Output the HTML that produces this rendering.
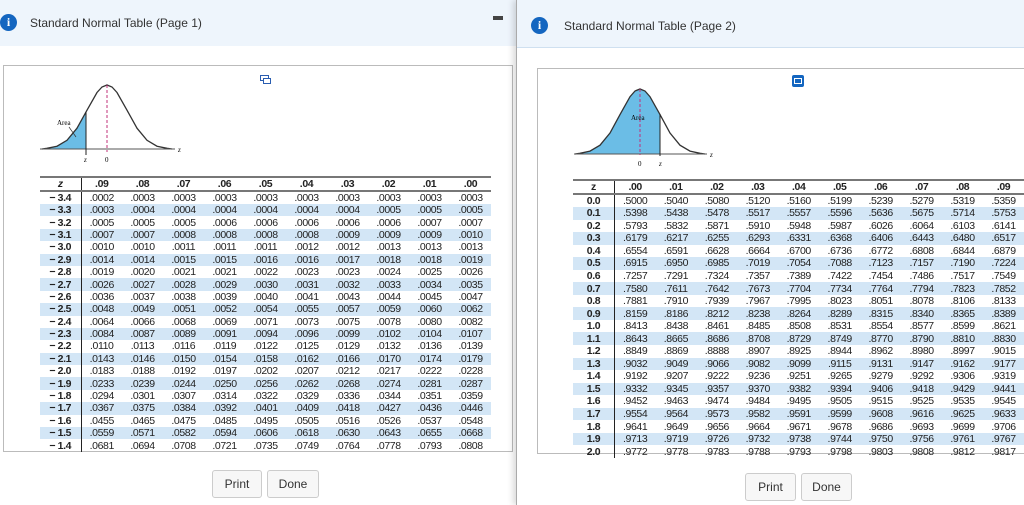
<!DOCTYPE html>
<html><head><meta charset="utf-8">
<style>
*{margin:0;padding:0;box-sizing:border-box}
body{width:1024px;height:505px;overflow:hidden;background:#fff;font-family:"Liberation Sans",sans-serif;position:relative}
.abs{position:absolute}
.hdr{background:#eef5fc}
.info{position:absolute;width:17px;height:17px;border-radius:50%;background:#1466c0;color:#fff;font:bold 12px "Liberation Serif",serif;text-align:center;line-height:17px}
.title{position:absolute;font-size:12px;color:#333}
.box{position:absolute;border:1px solid #bbb;background:#fff}
table{position:absolute;border-collapse:collapse;table-layout:fixed;font-size:10.5px;color:#222}
td,th{height:12.55px;padding:0;text-align:center;white-space:nowrap;line-height:12px;letter-spacing:-.4px}
table.l td,table.l th{height:12.4px}
th{font-weight:bold;font-size:10.5px}
tr.s td{background:#d3e6f6}
td:first-child,th:first-child{border-right:1px solid #222;font-weight:bold}
thead tr{border-top:2px solid #777;border-bottom:2px solid #777}
.btn{position:absolute;height:28px;border:1px solid #ccc;border-radius:3px;background:#f7f7f7;font-size:12px;color:#333;text-align:center;line-height:26px}
</style></head><body>
<!-- left panel -->
<div class="abs hdr" style="left:0;top:0;width:516px;height:46px"></div>
<div class="info" style="left:0;top:14px">i</div>
<div class="title" style="left:30px;top:16px">Standard Normal Table (Page 1)</div>
<div class="abs" style="left:493px;top:16px;width:10px;height:4px;background:#444"></div>
<div class="box" style="left:3px;top:65px;width:510px;height:387px"></div>
<div class="abs" style="left:260px;top:75px;width:9px;height:6px;border:1.5px solid #2a5db0"></div>
<div class="abs" style="left:263px;top:78px;width:8px;height:6px;border:1.5px solid #2a5db0;background:#fff"></div>
<svg class="abs" style="left:0;top:0" width="512" height="180">
<polygon points="42,149 47,148.3 57,146.2 67,140.3 77,128.2 86,112 86,149" fill="#6bbde6"/>
<polyline points="42,149 47,148.3 57,146.2 67,140.3 77,128.2 87,110.2 97,92.5 102,87 107,85 112,87 117,92.5 127,110.2 137,128.2 147,140.3 157,146.2 167,148.3 172,149" fill="none" stroke="#333" stroke-width="1.3"/>
<line x1="40" y1="149" x2="175" y2="149" stroke="#555"/>
<line x1="86" y1="112" x2="86" y2="155" stroke="#222"/>
<line x1="107" y1="85" x2="107" y2="152" stroke="#c0307a" stroke-dasharray="3,2"/>
<text x="57" y="125" font-size="7" font-family="Liberation Serif">Area</text>
<line x1="69" y1="127" x2="76" y2="137" stroke="#333" stroke-width=".7"/>
<text x="84" y="162" font-size="7" font-family="Liberation Serif" font-style="italic">z</text>
<text x="105" y="162" font-size="7" font-family="Liberation Serif">0</text>
<text x="178" y="152" font-size="7" font-family="Liberation Serif" font-style="italic">z</text>
</svg>
<table class="l" style="left:40px;top:176px;width:451px">
<colgroup><col style="width:41px"><col span="10" style="width:41px"></colgroup>
<thead><tr><th><i>z</i></th><th>.09</th><th>.08</th><th>.07</th><th>.06</th><th>.05</th><th>.04</th><th>.03</th><th>.02</th><th>.01</th><th>.00</th></tr></thead>
<tbody>
<tr><td>− 3.4</td><td>.0002</td><td>.0003</td><td>.0003</td><td>.0003</td><td>.0003</td><td>.0003</td><td>.0003</td><td>.0003</td><td>.0003</td><td>.0003</td></tr>
<tr class="s"><td>− 3.3</td><td>.0003</td><td>.0004</td><td>.0004</td><td>.0004</td><td>.0004</td><td>.0004</td><td>.0004</td><td>.0005</td><td>.0005</td><td>.0005</td></tr>
<tr><td>− 3.2</td><td>.0005</td><td>.0005</td><td>.0005</td><td>.0006</td><td>.0006</td><td>.0006</td><td>.0006</td><td>.0006</td><td>.0007</td><td>.0007</td></tr>
<tr class="s"><td>− 3.1</td><td>.0007</td><td>.0007</td><td>.0008</td><td>.0008</td><td>.0008</td><td>.0008</td><td>.0009</td><td>.0009</td><td>.0009</td><td>.0010</td></tr>
<tr><td>− 3.0</td><td>.0010</td><td>.0010</td><td>.0011</td><td>.0011</td><td>.0011</td><td>.0012</td><td>.0012</td><td>.0013</td><td>.0013</td><td>.0013</td></tr>
<tr class="s"><td>− 2.9</td><td>.0014</td><td>.0014</td><td>.0015</td><td>.0015</td><td>.0016</td><td>.0016</td><td>.0017</td><td>.0018</td><td>.0018</td><td>.0019</td></tr>
<tr><td>− 2.8</td><td>.0019</td><td>.0020</td><td>.0021</td><td>.0021</td><td>.0022</td><td>.0023</td><td>.0023</td><td>.0024</td><td>.0025</td><td>.0026</td></tr>
<tr class="s"><td>− 2.7</td><td>.0026</td><td>.0027</td><td>.0028</td><td>.0029</td><td>.0030</td><td>.0031</td><td>.0032</td><td>.0033</td><td>.0034</td><td>.0035</td></tr>
<tr><td>− 2.6</td><td>.0036</td><td>.0037</td><td>.0038</td><td>.0039</td><td>.0040</td><td>.0041</td><td>.0043</td><td>.0044</td><td>.0045</td><td>.0047</td></tr>
<tr class="s"><td>− 2.5</td><td>.0048</td><td>.0049</td><td>.0051</td><td>.0052</td><td>.0054</td><td>.0055</td><td>.0057</td><td>.0059</td><td>.0060</td><td>.0062</td></tr>
<tr><td>− 2.4</td><td>.0064</td><td>.0066</td><td>.0068</td><td>.0069</td><td>.0071</td><td>.0073</td><td>.0075</td><td>.0078</td><td>.0080</td><td>.0082</td></tr>
<tr class="s"><td>− 2.3</td><td>.0084</td><td>.0087</td><td>.0089</td><td>.0091</td><td>.0094</td><td>.0096</td><td>.0099</td><td>.0102</td><td>.0104</td><td>.0107</td></tr>
<tr><td>− 2.2</td><td>.0110</td><td>.0113</td><td>.0116</td><td>.0119</td><td>.0122</td><td>.0125</td><td>.0129</td><td>.0132</td><td>.0136</td><td>.0139</td></tr>
<tr class="s"><td>− 2.1</td><td>.0143</td><td>.0146</td><td>.0150</td><td>.0154</td><td>.0158</td><td>.0162</td><td>.0166</td><td>.0170</td><td>.0174</td><td>.0179</td></tr>
<tr><td>− 2.0</td><td>.0183</td><td>.0188</td><td>.0192</td><td>.0197</td><td>.0202</td><td>.0207</td><td>.0212</td><td>.0217</td><td>.0222</td><td>.0228</td></tr>
<tr class="s"><td>− 1.9</td><td>.0233</td><td>.0239</td><td>.0244</td><td>.0250</td><td>.0256</td><td>.0262</td><td>.0268</td><td>.0274</td><td>.0281</td><td>.0287</td></tr>
<tr><td>− 1.8</td><td>.0294</td><td>.0301</td><td>.0307</td><td>.0314</td><td>.0322</td><td>.0329</td><td>.0336</td><td>.0344</td><td>.0351</td><td>.0359</td></tr>
<tr class="s"><td>− 1.7</td><td>.0367</td><td>.0375</td><td>.0384</td><td>.0392</td><td>.0401</td><td>.0409</td><td>.0418</td><td>.0427</td><td>.0436</td><td>.0446</td></tr>
<tr><td>− 1.6</td><td>.0455</td><td>.0465</td><td>.0475</td><td>.0485</td><td>.0495</td><td>.0505</td><td>.0516</td><td>.0526</td><td>.0537</td><td>.0548</td></tr>
<tr class="s"><td>− 1.5</td><td>.0559</td><td>.0571</td><td>.0582</td><td>.0594</td><td>.0606</td><td>.0618</td><td>.0630</td><td>.0643</td><td>.0655</td><td>.0668</td></tr>
<tr><td>− 1.4</td><td>.0681</td><td>.0694</td><td>.0708</td><td>.0721</td><td>.0735</td><td>.0749</td><td>.0764</td><td>.0778</td><td>.0793</td><td>.0808</td></tr>
</tbody></table>
<div class="btn" style="left:212px;top:470px;width:50px">Print</div>
<div class="btn" style="left:267px;top:470px;width:52px">Done</div>

<!-- right panel -->
<div class="abs" style="left:516px;top:0;width:508px;height:505px;background:#fff;border-left:1px solid #aaa;box-shadow:-3px 0 6px rgba(0,0,0,.15)"></div>
<div class="abs hdr" style="left:517px;top:0;width:507px;height:48px;border-bottom:1px solid #cfe0f0"></div>
<div class="info" style="left:531px;top:17px">i</div>
<div class="title" style="left:564px;top:19px">Standard Normal Table (Page 2)</div>
<div class="box" style="left:537px;top:68px;width:495px;height:386px"></div>
<div class="abs" style="left:792px;top:75px;width:12px;height:12px;background:#1466c0;border-radius:2px"></div>
<div class="abs" style="left:794px;top:78px;width:8px;height:6px;border:1px solid #fff"></div>
<svg class="abs" style="left:512px;top:0" width="512" height="180">
<polygon points="63,154 68,153.3 78,151.1 88,145.2 98,133 108,114.6 118,96.7 123,91 128,89 133,91 138,96.7 148,114.6 148,154" fill="#6bbde6"/>
<polyline points="63,154 68,153.3 78,151.1 88,145.2 98,133 108,114.6 118,96.7 123,91 128,89 133,91 138,96.7 148,114.6 158,133 168,145.2 178,151.1 188,153.3 193,154" fill="none" stroke="#333" stroke-width="1.3"/>
<line x1="62" y1="154" x2="195" y2="154" stroke="#555"/>
<line x1="148" y1="114" x2="148" y2="156" stroke="#222"/>
<line x1="128" y1="89" x2="128" y2="155" stroke="#c0307a" stroke-dasharray="3,2"/>
<text x="119" y="120" font-size="7" font-family="Liberation Serif">Area</text>
<text x="126" y="166" font-size="7" font-family="Liberation Serif">0</text>
<text x="147" y="166" font-size="7" font-family="Liberation Serif" font-style="italic">z</text>
<text x="198" y="157" font-size="7" font-family="Liberation Serif" font-style="italic">z</text>
</svg>
<table style="left:573px;top:179px;width:451px">
<colgroup><col style="width:41px"><col span="10" style="width:40.5px"></colgroup>
<thead><tr><th>z</th><th>.00</th><th>.01</th><th>.02</th><th>.03</th><th>.04</th><th>.05</th><th>.06</th><th>.07</th><th>.08</th><th>.09</th></tr></thead>
<tbody>
<tr><td>0.0</td><td>.5000</td><td>.5040</td><td>.5080</td><td>.5120</td><td>.5160</td><td>.5199</td><td>.5239</td><td>.5279</td><td>.5319</td><td>.5359</td></tr>
<tr class="s"><td>0.1</td><td>.5398</td><td>.5438</td><td>.5478</td><td>.5517</td><td>.5557</td><td>.5596</td><td>.5636</td><td>.5675</td><td>.5714</td><td>.5753</td></tr>
<tr><td>0.2</td><td>.5793</td><td>.5832</td><td>.5871</td><td>.5910</td><td>.5948</td><td>.5987</td><td>.6026</td><td>.6064</td><td>.6103</td><td>.6141</td></tr>
<tr class="s"><td>0.3</td><td>.6179</td><td>.6217</td><td>.6255</td><td>.6293</td><td>.6331</td><td>.6368</td><td>.6406</td><td>.6443</td><td>.6480</td><td>.6517</td></tr>
<tr><td>0.4</td><td>.6554</td><td>.6591</td><td>.6628</td><td>.6664</td><td>.6700</td><td>.6736</td><td>.6772</td><td>.6808</td><td>.6844</td><td>.6879</td></tr>
<tr class="s"><td>0.5</td><td>.6915</td><td>.6950</td><td>.6985</td><td>.7019</td><td>.7054</td><td>.7088</td><td>.7123</td><td>.7157</td><td>.7190</td><td>.7224</td></tr>
<tr><td>0.6</td><td>.7257</td><td>.7291</td><td>.7324</td><td>.7357</td><td>.7389</td><td>.7422</td><td>.7454</td><td>.7486</td><td>.7517</td><td>.7549</td></tr>
<tr class="s"><td>0.7</td><td>.7580</td><td>.7611</td><td>.7642</td><td>.7673</td><td>.7704</td><td>.7734</td><td>.7764</td><td>.7794</td><td>.7823</td><td>.7852</td></tr>
<tr><td>0.8</td><td>.7881</td><td>.7910</td><td>.7939</td><td>.7967</td><td>.7995</td><td>.8023</td><td>.8051</td><td>.8078</td><td>.8106</td><td>.8133</td></tr>
<tr class="s"><td>0.9</td><td>.8159</td><td>.8186</td><td>.8212</td><td>.8238</td><td>.8264</td><td>.8289</td><td>.8315</td><td>.8340</td><td>.8365</td><td>.8389</td></tr>
<tr><td>1.0</td><td>.8413</td><td>.8438</td><td>.8461</td><td>.8485</td><td>.8508</td><td>.8531</td><td>.8554</td><td>.8577</td><td>.8599</td><td>.8621</td></tr>
<tr class="s"><td>1.1</td><td>.8643</td><td>.8665</td><td>.8686</td><td>.8708</td><td>.8729</td><td>.8749</td><td>.8770</td><td>.8790</td><td>.8810</td><td>.8830</td></tr>
<tr><td>1.2</td><td>.8849</td><td>.8869</td><td>.8888</td><td>.8907</td><td>.8925</td><td>.8944</td><td>.8962</td><td>.8980</td><td>.8997</td><td>.9015</td></tr>
<tr class="s"><td>1.3</td><td>.9032</td><td>.9049</td><td>.9066</td><td>.9082</td><td>.9099</td><td>.9115</td><td>.9131</td><td>.9147</td><td>.9162</td><td>.9177</td></tr>
<tr><td>1.4</td><td>.9192</td><td>.9207</td><td>.9222</td><td>.9236</td><td>.9251</td><td>.9265</td><td>.9279</td><td>.9292</td><td>.9306</td><td>.9319</td></tr>
<tr class="s"><td>1.5</td><td>.9332</td><td>.9345</td><td>.9357</td><td>.9370</td><td>.9382</td><td>.9394</td><td>.9406</td><td>.9418</td><td>.9429</td><td>.9441</td></tr>
<tr><td>1.6</td><td>.9452</td><td>.9463</td><td>.9474</td><td>.9484</td><td>.9495</td><td>.9505</td><td>.9515</td><td>.9525</td><td>.9535</td><td>.9545</td></tr>
<tr class="s"><td>1.7</td><td>.9554</td><td>.9564</td><td>.9573</td><td>.9582</td><td>.9591</td><td>.9599</td><td>.9608</td><td>.9616</td><td>.9625</td><td>.9633</td></tr>
<tr><td>1.8</td><td>.9641</td><td>.9649</td><td>.9656</td><td>.9664</td><td>.9671</td><td>.9678</td><td>.9686</td><td>.9693</td><td>.9699</td><td>.9706</td></tr>
<tr class="s"><td>1.9</td><td>.9713</td><td>.9719</td><td>.9726</td><td>.9732</td><td>.9738</td><td>.9744</td><td>.9750</td><td>.9756</td><td>.9761</td><td>.9767</td></tr>
<tr><td>2.0</td><td>.9772</td><td>.9778</td><td>.9783</td><td>.9788</td><td>.9793</td><td>.9798</td><td>.9803</td><td>.9808</td><td>.9812</td><td>.9817</td></tr>
</tbody></table>
<div class="btn" style="left:745px;top:473px;width:51px">Print</div>
<div class="btn" style="left:801px;top:473px;width:51px">Done</div>
</body></html>
